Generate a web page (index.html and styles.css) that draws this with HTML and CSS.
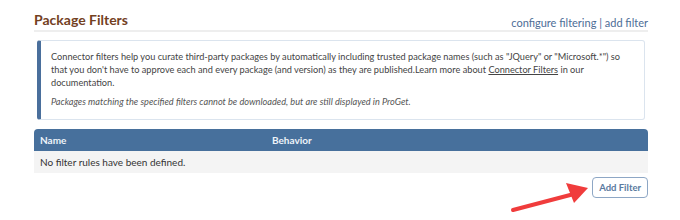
FILE: index.html
```html
<!DOCTYPE html>
<html lang="en">
<head>
    <meta charset="UTF-8">
    <title>Package Filters</title>
    <link rel="stylesheet" href="styles.css">
</head>
<body>
    <div class="page">
        <div class="section-head">
            <h2>Package Filters</h2>
            <div class="head-links">
                <a href="#">configure filtering</a> | <a href="#">add filter</a>
            </div>
        </div>

        <div class="info-box">
            <p>Connector filters help you curate third-party packages by automatically including trusted package names (such as "JQuery" or "Microsoft.*") so that you don't have to approve each and every package (and version) as they are published.Learn more about <a href="#">Connector Filters</a> in our documentation.</p>
            <p class="note">Packages matching the specified filters cannot be downloaded, but are still displayed in ProGet.</p>
        </div>

        <table class="grid">
            <thead>
                <tr>
                    <th class="col-name">Name</th>
                    <th>Behavior</th>
                </tr>
            </thead>
            <tbody>
                <tr>
                    <td colspan="2">No filter rules have been defined.</td>
                </tr>
            </tbody>
        </table>

        <div class="actions">
            <button class="button">Add Filter</button>
        </div>
    </div>

    <svg class="callout-arrow" width="90" height="40" viewBox="0 0 90 40">
        <line x1="5" y1="30" x2="66" y2="14" stroke="#f03c3c" stroke-width="4" stroke-linecap="round"/>
        <polygon points="80,8 58,3 66,23" fill="#f03c3c"/>
    </svg>
</body>
</html>
```

FILE: styles.css
```css
body {
    margin: 0;
    font-family: Lato, 'Noto Sans', sans-serif;
    color: #444;
    background: #fff;
}

.page {
    padding: 11px 32px 0 34px;
}

/* Section header */
.section-head {
    display: flex;
    justify-content: space-between;
    align-items: flex-end;
    border-bottom: 2px solid #eeeeee;
    padding-bottom: 2px;
}

h2 {
    margin: 0;
    font-size: 14px;
    font-weight: bold;
    color: #73411f;
}

.head-links {
    font-size: 11px;
    color: #4d6d96;
    margin-bottom: -1px;
}

.head-links a {
    color: #4d6d96;
    text-decoration: none;
}

/* Info box */
.info-box {
    margin: 8px 3px 0 3px;
    padding: 9px 20px 11px 10px;
    border: 1px solid #dbe4ee;
    border-left: 4px solid #4a6f9c;
    border-radius: 3px;
    font-size: 9.2px;
    line-height: 13px;
    color: #444;
}

.info-box p {
    margin: 0;
}

.info-box a {
    color: #444;
}

.info-box .note {
    margin-top: 6px;
    font-style: italic;
    color: #555;
}

/* Table */
.grid {
    width: 100%;
    margin-top: 9px;
    border-collapse: separate;
    border-spacing: 0;
    font-size: 10px;
}

.grid th {
    background: #47709c;
    color: #eef3f9;
    text-align: left;
    height: 22px;
    padding: 0 6px;
    font-weight: bold;
}

.grid th:first-child {
    border-top-left-radius: 4px;
}

.grid th:last-child {
    border-top-right-radius: 4px;
}

.grid .col-name {
    width: 220px;
}

.grid td {
    background: #f4f4f4;
    height: 22px;
    padding: 0 6px;
    color: #333;
}

/* Buttons */
.actions {
    display: flex;
    justify-content: flex-end;
    margin-top: 4px;
}

.button {
    font-family: Lato, 'Noto Sans', sans-serif;
    font-size: 9.5px;
    font-weight: bold;
    color: #5a7aa0;
    background: #fff;
    border: 1px solid #8ea7c5;
    border-radius: 4px;
    height: 21px;
    padding: 0 6px;
}

.callout-arrow {
    position: absolute;
    left: 508px;
    top: 180px;
}
```
